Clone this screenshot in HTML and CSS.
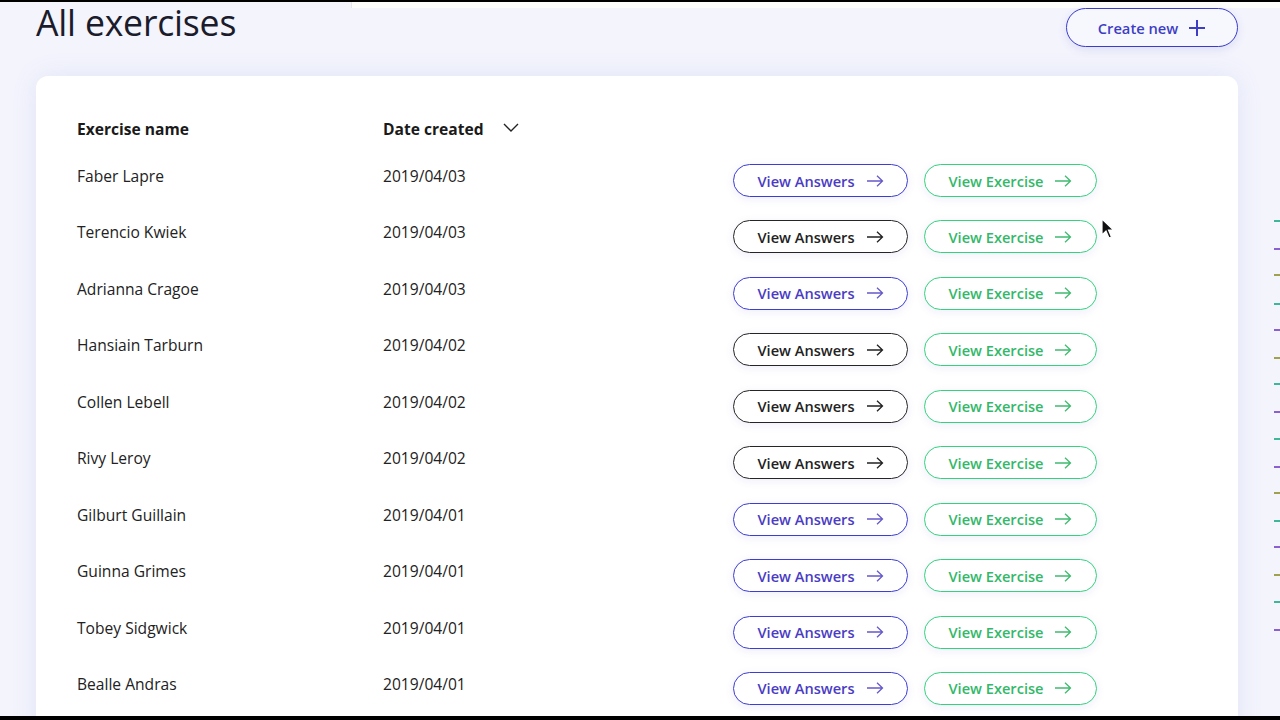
FILE: index.html
```html
<!DOCTYPE html>
<html lang="en">
<head>
<meta charset="utf-8"/>
<title>All exercises</title>
<link rel="stylesheet" href="styles.css">
</head>
<body>
<div class="topbar"></div>
<div class="topstrip"><div class="topstrip-left"></div><div class="topstrip-right"></div></div>

<header class="page-head">
  <h1>All exercises</h1>
  <a class="btn-create" href="#">Create new
    <svg width="18" height="18" viewBox="0 0 18 18"><path d="M9 1 V17 M1 9 H17" stroke="currentColor" stroke-width="2" fill="none"/></svg>
  </a>
</header>

<main class="card">
  <div class="row head">
    <div>Exercise name</div>
    <div class="sort">Date created
      <svg width="16" height="10" viewBox="0 0 16 10"><path d="M1 1 L8 8 L15 1" stroke="#222" stroke-width="1.4" fill="none"/></svg>
    </div>
  </div>

  <div class="row">
    <div class="name">Faber Lapre</div><div class="date">2019/04/03</div>
    <div class="actions"><a class="btn blue" href="#">View Answers <span class="arr"></span></a><a class="btn green" href="#">View Exercise <span class="arr"></span></a></div>
  </div>
  <div class="row">
    <div class="name">Terencio Kwiek</div><div class="date">2019/04/03</div>
    <div class="actions"><a class="btn dark" href="#">View Answers <span class="arr"></span></a><a class="btn green" href="#">View Exercise <span class="arr"></span></a></div>
  </div>
  <div class="row">
    <div class="name">Adrianna Cragoe</div><div class="date">2019/04/03</div>
    <div class="actions"><a class="btn blue" href="#">View Answers <span class="arr"></span></a><a class="btn green" href="#">View Exercise <span class="arr"></span></a></div>
  </div>
  <div class="row">
    <div class="name">Hansiain Tarburn</div><div class="date">2019/04/02</div>
    <div class="actions"><a class="btn dark" href="#">View Answers <span class="arr"></span></a><a class="btn green" href="#">View Exercise <span class="arr"></span></a></div>
  </div>
  <div class="row">
    <div class="name">Collen Lebell</div><div class="date">2019/04/02</div>
    <div class="actions"><a class="btn dark" href="#">View Answers <span class="arr"></span></a><a class="btn green" href="#">View Exercise <span class="arr"></span></a></div>
  </div>
  <div class="row">
    <div class="name">Rivy Leroy</div><div class="date">2019/04/02</div>
    <div class="actions"><a class="btn dark" href="#">View Answers <span class="arr"></span></a><a class="btn green" href="#">View Exercise <span class="arr"></span></a></div>
  </div>
  <div class="row">
    <div class="name">Gilburt Guillain</div><div class="date">2019/04/01</div>
    <div class="actions"><a class="btn blue" href="#">View Answers <span class="arr"></span></a><a class="btn green" href="#">View Exercise <span class="arr"></span></a></div>
  </div>
  <div class="row">
    <div class="name">Guinna Grimes</div><div class="date">2019/04/01</div>
    <div class="actions"><a class="btn blue" href="#">View Answers <span class="arr"></span></a><a class="btn green" href="#">View Exercise <span class="arr"></span></a></div>
  </div>
  <div class="row">
    <div class="name">Tobey Sidgwick</div><div class="date">2019/04/01</div>
    <div class="actions"><a class="btn blue" href="#">View Answers <span class="arr"></span></a><a class="btn green" href="#">View Exercise <span class="arr"></span></a></div>
  </div>
  <div class="row">
    <div class="name">Bealle Andras</div><div class="date">2019/04/01</div>
    <div class="actions"><a class="btn blue" href="#">View Answers <span class="arr"></span></a><a class="btn green" href="#">View Exercise <span class="arr"></span></a></div>
  </div>
</main>

<!-- edge of the next panel, cut off -->
<div class="edge">
  <i class="g"></i><i class="p"></i>
  <i class="o"></i><i class="g"></i>
  <i class="p"></i><i class="o"></i>
  <i class="g"></i><i class="p"></i>
  <i class="g"></i><i class="p"></i>
  <i class="o"></i><i class="g"></i>
  <i class="p"></i><i class="o"></i>
  <i class="g"></i><i class="p"></i>
</div>

<svg class="cursor" width="14" height="22" viewBox="0 0 14 22"><path d="M1 1 L1 17 L5 13 L8 20 L10.5 19 L7.5 12 L12.5 12 Z" fill="#111" stroke="#fff" stroke-width="1.2"/></svg>

<div class="bottombar"></div>
</body>
</html>
```

FILE: styles.css
```css
body {
  margin: 0;
  height: 720px;
  overflow: hidden;
  background: #f3f4fc;
  font-family: "Open Sans", "Liberation Sans", sans-serif;
  color: #222;
  position: relative;
}

.topbar {
  height: 2px;
  background: #000;
}
.topstrip {
  display: flex;
  height: 6px;
}
.topstrip-left {
  width: 351px;
}
.topstrip-right {
  flex: 1;
  background: #fdfefb;
  border-left: 1px solid #e8e8e8;
}

.page-head {
  display: flex;
  justify-content: space-between;
  align-items: flex-start;
  padding: 0 42px 0 36px;
}
.page-head h1 {
  margin: 0;
  font-size: 35.6px;
  line-height: 28px;
  font-weight: 400;
  color: #1b1b2b;
  letter-spacing: -0.2px;
}
.btn-create {
  display: flex;
  align-items: center;
  justify-content: center;
  gap: 10px;
  width: 172px;
  height: 39px;
  box-sizing: border-box;
  border: 1.6px solid #3b3bcc;
  border-radius: 20px;
  color: #3e3ec4;
  font-size: 14.7px;
  font-weight: 600;
  text-decoration: none;
  background: #f7f8fe;
  box-shadow: 0 3px 10px rgba(70, 70, 200, 0.12);
}

.card {
  margin: 29px 42px 0 36px;
  background: #fff;
  border-radius: 12px;
  padding: 43px 41px 0;
  height: 700px;
  box-shadow: 0 0 26px rgba(110, 120, 220, 0.12);
}

.row {
  display: grid;
  grid-template-columns: 306px 350px auto;
  height: 56.45px;
  font-size: 15.6px;
  line-height: 20px;
}
.row.head {
  height: 20px;
  margin-bottom: 13px;
  font-weight: 700;
  color: #1a1a1a;
}
.sort {
  display: flex;
  align-items: center;
  gap: 19px;
}
.sort svg {
  margin-top: -3px;
}
.name, .date {
  padding-top: 14px;
  color: #222;
}

.actions {
  display: flex;
  gap: 16px;
  padding-top: 12px;
}
.btn {
  display: flex;
  align-items: center;
  justify-content: center;
  gap: 11px;
  height: 33px;
  box-sizing: border-box;
  border: 1.6px solid;
  border-radius: 17px;
  font-size: 14.6px;
  font-weight: 600;
  text-decoration: none;
  background: #fff;
  box-shadow: 0 2px 9px rgba(90, 90, 210, 0.1);
}
.btn.blue, .btn.dark {
  width: 175px;
}
.btn.green {
  width: 173px;
}
.btn.blue {
  border-color: #3d3dd4;
  color: #4a3cc4;
}
.btn.dark {
  border-color: #252525;
  color: #222;
}
.btn.green {
  border-color: #34d27e;
  color: #33b869;
}

.arr {
  width: 18px;
  height: 12px;
  background: no-repeat center / 18px 12px;
}
.btn .arr {
  background-image: url("data:image/svg+xml,%3Csvg xmlns='http://www.w3.org/2000/svg' viewBox='0 0 18 12'%3E%3Cpath d='M1 6 H16.5 M11 0.8 L16.5 6 L11 11.2' stroke='%23222' stroke-width='1.3' fill='none'/%3E%3C/svg%3E");
}
.btn.blue .arr {
  background-image: url("data:image/svg+xml,%3Csvg xmlns='http://www.w3.org/2000/svg' viewBox='0 0 18 12'%3E%3Cpath d='M1 6 H16.5 M11 0.8 L16.5 6 L11 11.2' stroke='%23665acb' stroke-width='1.3' fill='none'/%3E%3C/svg%3E");
}
.btn.green .arr {
  background-image: url("data:image/svg+xml,%3Csvg xmlns='http://www.w3.org/2000/svg' viewBox='0 0 18 12'%3E%3Cpath d='M1 6 H16.5 M11 0.8 L16.5 6 L11 11.2' stroke='%2340bb70' stroke-width='1.3' fill='none'/%3E%3C/svg%3E");
}

.edge {
  position: absolute;
  left: 1274px;
  top: 220px;
  width: 6px;
  display: flex;
  flex-direction: column;
}
.edge i {
  display: block;
  height: 2px;
  margin-bottom: 26.2px;
}
.edge i:nth-child(2n) {
  margin-bottom: 24.2px;
}
.edge i.g { background: #3fb59a; }
.edge i.p { background: #8a5fd0; }
.edge i.o { background: #a0a050; }

.cursor {
  position: absolute;
  left: 1101px;
  top: 218px;
}

.bottombar {
  position: absolute;
  left: 0;
  right: 0;
  bottom: 0;
  height: 4px;
  background: #000;
}
```
